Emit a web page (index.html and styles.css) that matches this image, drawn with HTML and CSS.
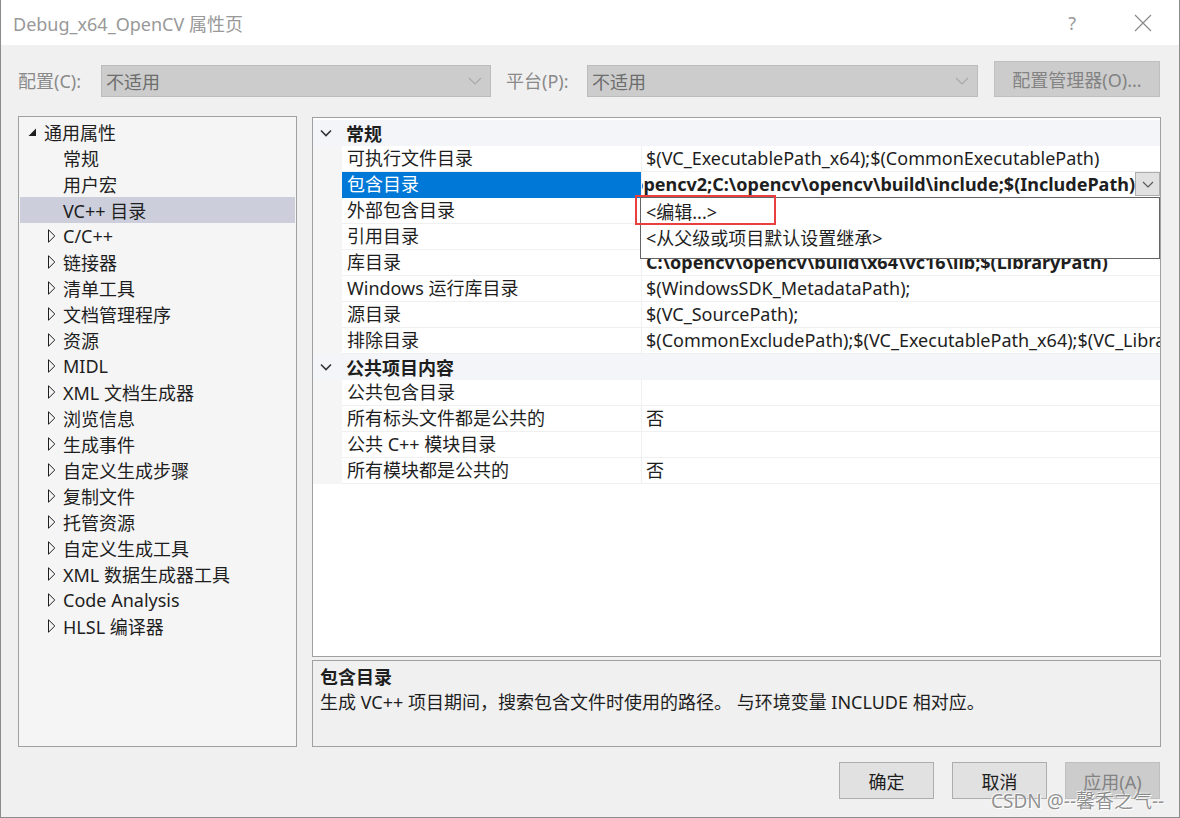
FILE: index.html
```html
<!DOCTYPE html>
<html lang="zh-CN">
<head>
    <meta charset="UTF-8">
    <title>Debug_x64_OpenCV 属性页</title>
    <link rel="stylesheet" href="styles.css">
</head>
<body>
<div class="window">
    <div class="titlebar">
        <span class="title">Debug_x64_OpenCV 属性页</span>
        <span class="help">?</span>
        <svg class="close" width="18" height="18" viewBox="0 0 18 18">
            <path d="M1 1 L17 17 M17 1 L1 17" stroke="#8a8a8a" stroke-width="1.2" fill="none"/>
        </svg>
    </div>

    <div class="config-row">
        <label class="cfg-label">配置(C):</label>
        <div class="combo combo-cfg">
            <span>不适用</span>
            <svg width="14" height="8" viewBox="0 0 14 8"><path d="M1 1 L7 7 L13 1" stroke="#a8a8a8" stroke-width="1.1" fill="none"/></svg>
        </div>
        <label class="cfg-label plat-label">平台(P):</label>
        <div class="combo combo-plat">
            <span>不适用</span>
            <svg width="14" height="8" viewBox="0 0 14 8"><path d="M1 1 L7 7 L13 1" stroke="#a8a8a8" stroke-width="1.1" fill="none"/></svg>
        </div>
        <button class="btn btn-disabled cfg-mgr">配置管理器(O)...</button>
    </div>

    <div class="main">
        <div class="tree">
            <div class="tree-row root">
                <span class="twisty"><svg width="9" height="9" viewBox="0 0 9 9"><path d="M8 0.5 L8 8 L0.5 8 Z" fill="#1e1e1e"/></svg></span>
                <span>通用属性</span>
            </div>
            <div class="tree-row child"><span class="twisty"></span><span>常规</span></div>
            <div class="tree-row child"><span class="twisty"></span><span>用户宏</span></div>
            <div class="tree-row child selected"><span class="twisty"></span><span>VC++ 目录</span></div>
            <div class="tree-row child"><span class="twisty"><svg class="tri" viewBox="0 0 8 14"><path d="M0.5 0.8 L6.8 7 L0.5 13.2 Z"/></svg></span><span>C/C++</span></div>
            <div class="tree-row child"><span class="twisty"><svg class="tri" viewBox="0 0 8 14"><path d="M0.5 0.8 L6.8 7 L0.5 13.2 Z"/></svg></span><span>链接器</span></div>
            <div class="tree-row child"><span class="twisty"><svg class="tri" viewBox="0 0 8 14"><path d="M0.5 0.8 L6.8 7 L0.5 13.2 Z"/></svg></span><span>清单工具</span></div>
            <div class="tree-row child"><span class="twisty"><svg class="tri" viewBox="0 0 8 14"><path d="M0.5 0.8 L6.8 7 L0.5 13.2 Z"/></svg></span><span>文档管理程序</span></div>
            <div class="tree-row child"><span class="twisty"><svg class="tri" viewBox="0 0 8 14"><path d="M0.5 0.8 L6.8 7 L0.5 13.2 Z"/></svg></span><span>资源</span></div>
            <div class="tree-row child"><span class="twisty"><svg class="tri" viewBox="0 0 8 14"><path d="M0.5 0.8 L6.8 7 L0.5 13.2 Z"/></svg></span><span>MIDL</span></div>
            <div class="tree-row child"><span class="twisty"><svg class="tri" viewBox="0 0 8 14"><path d="M0.5 0.8 L6.8 7 L0.5 13.2 Z"/></svg></span><span>XML 文档生成器</span></div>
            <div class="tree-row child"><span class="twisty"><svg class="tri" viewBox="0 0 8 14"><path d="M0.5 0.8 L6.8 7 L0.5 13.2 Z"/></svg></span><span>浏览信息</span></div>
            <div class="tree-row child"><span class="twisty"><svg class="tri" viewBox="0 0 8 14"><path d="M0.5 0.8 L6.8 7 L0.5 13.2 Z"/></svg></span><span>生成事件</span></div>
            <div class="tree-row child"><span class="twisty"><svg class="tri" viewBox="0 0 8 14"><path d="M0.5 0.8 L6.8 7 L0.5 13.2 Z"/></svg></span><span>自定义生成步骤</span></div>
            <div class="tree-row child"><span class="twisty"><svg class="tri" viewBox="0 0 8 14"><path d="M0.5 0.8 L6.8 7 L0.5 13.2 Z"/></svg></span><span>复制文件</span></div>
            <div class="tree-row child"><span class="twisty"><svg class="tri" viewBox="0 0 8 14"><path d="M0.5 0.8 L6.8 7 L0.5 13.2 Z"/></svg></span><span>托管资源</span></div>
            <div class="tree-row child"><span class="twisty"><svg class="tri" viewBox="0 0 8 14"><path d="M0.5 0.8 L6.8 7 L0.5 13.2 Z"/></svg></span><span>自定义生成工具</span></div>
            <div class="tree-row child"><span class="twisty"><svg class="tri" viewBox="0 0 8 14"><path d="M0.5 0.8 L6.8 7 L0.5 13.2 Z"/></svg></span><span>XML 数据生成器工具</span></div>
            <div class="tree-row child"><span class="twisty"><svg class="tri" viewBox="0 0 8 14"><path d="M0.5 0.8 L6.8 7 L0.5 13.2 Z"/></svg></span><span>Code Analysis</span></div>
            <div class="tree-row child"><span class="twisty"><svg class="tri" viewBox="0 0 8 14"><path d="M0.5 0.8 L6.8 7 L0.5 13.2 Z"/></svg></span><span>HLSL 编译器</span></div>
        </div>

        <div class="right">
            <div class="grid">
                <div class="cat-row">
                    <span class="cat-chevron"><svg width="12" height="8" viewBox="0 0 12 8"><path d="M1 1.5 L6 6.5 L11 1.5" stroke="#333" stroke-width="1.6" fill="none"/></svg></span>
                    <span class="cat-name">常规</span>
                </div>
                <div class="prop-row">
                    <span class="gutter"></span>
                    <span class="name">可执行文件目录</span>
                    <span class="value">$(VC_ExecutablePath_x64);$(CommonExecutablePath)</span>
                </div>
                <div class="prop-row">
                    <span class="gutter"></span>
                    <span class="name active">包含目录</span>
                    <span class="value edit">
                        <span class="edit-text"><b>C:\opencv\opencv\build\include\opencv2;C:\opencv\opencv\build\include;$(IncludePath)</b></span>
                        <span class="drop-btn"><svg width="12" height="7" viewBox="0 0 12 7"><path d="M1 1 L6 6 L11 1" stroke="#555" stroke-width="1.1" fill="none"/></svg></span>
                    </span>
                </div>
                <div class="prop-row">
                    <span class="gutter"></span>
                    <span class="name">外部包含目录</span>
                    <span class="value"></span>
                </div>
                <div class="prop-row">
                    <span class="gutter"></span>
                    <span class="name">引用目录</span>
                    <span class="value"></span>
                </div>
                <div class="prop-row">
                    <span class="gutter"></span>
                    <span class="name">库目录</span>
                    <span class="value"><b>C:\opencv\opencv\build\x64\vc16\lib;$(LibraryPath)</b></span>
                </div>
                <div class="prop-row">
                    <span class="gutter"></span>
                    <span class="name">Windows 运行库目录</span>
                    <span class="value">$(WindowsSDK_MetadataPath);</span>
                </div>
                <div class="prop-row">
                    <span class="gutter"></span>
                    <span class="name">源目录</span>
                    <span class="value">$(VC_SourcePath);</span>
                </div>
                <div class="prop-row">
                    <span class="gutter"></span>
                    <span class="name">排除目录</span>
                    <span class="value">$(CommonExcludePath);$(VC_ExecutablePath_x64);$(VC_LibraryPath_x64)</span>
                </div>
                <div class="cat-row">
                    <span class="cat-chevron"><svg width="12" height="8" viewBox="0 0 12 8"><path d="M1 1.5 L6 6.5 L11 1.5" stroke="#333" stroke-width="1.6" fill="none"/></svg></span>
                    <span class="cat-name">公共项目内容</span>
                </div>
                <div class="prop-row">
                    <span class="gutter"></span>
                    <span class="name">公共包含目录</span>
                    <span class="value"></span>
                </div>
                <div class="prop-row">
                    <span class="gutter"></span>
                    <span class="name">所有标头文件都是公共的</span>
                    <span class="value">否</span>
                </div>
                <div class="prop-row">
                    <span class="gutter"></span>
                    <span class="name">公共 C++ 模块目录</span>
                    <span class="value"></span>
                </div>
                <div class="prop-row">
                    <span class="gutter"></span>
                    <span class="name">所有模块都是公共的</span>
                    <span class="value">否</span>
                </div>

                <!-- open dropdown of 包含目录 -->
                <div class="dropdown">
                    <div class="drop-item">&lt;编辑...&gt;</div>
                    <div class="drop-item">&lt;从父级或项目默认设置继承&gt;</div>
                </div>
                <div class="mark"></div>
            </div>

            <div class="desc">
                <div class="desc-title">包含目录</div>
                <div class="desc-text">生成 VC++ 项目期间，搜索包含文件时使用的路径。 与环境变量 INCLUDE 相对应。</div>
            </div>
        </div>
    </div>

    <div class="buttons">
        <button class="btn">确定</button>
        <button class="btn">取消</button>
        <button class="btn btn-disabled">应用(A)</button>
    </div>

    <div class="watermark">CSDN @--馨香之气--</div>
</div>
</body>
</html>
```

FILE: styles.css
```css
body {
    margin: 0;
    background: #f0f0f0;
    font-family: "Noto Sans", "Noto Sans CJK SC", sans-serif;
    font-size: 18px;
    color: #1e1e1e;
}
.window {
    position: relative;
    width: 1180px;
    height: 818px;
    box-sizing: border-box;
    border-left: 1px solid #8c8c8c;
    border-right: 1px solid #8c8c8c;
    border-bottom: 1px solid #8c8c8c;
    background: #f0f0f0;
    overflow: hidden;
}
.titlebar {
    height: 45px;
    background: #fff;
    display: flex;
    align-items: center;
    padding-left: 12px;
}
.title {
    font-size: 18px;
    color: #999;
    flex: 1;
}
.help {
    font-size: 18px;
    color: #999;
    margin-right: 58px;
}
.close {
    margin-right: 27px;
}
.config-row {
    display: flex;
    align-items: flex-end;
    padding: 16px 0 0 17px;
    height: 36px;
}
.cfg-label {
    width: 83px;
    height: 32px;
    line-height: 32px;
    color: #8a8a8a;
}
.plat-label {
    width: 81px;
    margin-left: 15px;
}
.combo {
    height: 32px;
    box-sizing: border-box;
    background: #cccccc;
    border: 1px solid #bcbcbc;
    display: flex;
    align-items: center;
    justify-content: space-between;
    padding: 0 8px 0 4px;
    color: #6d6d6d;
}
.combo-cfg { width: 390px; }
.combo-plat { width: 391px; }
.btn {
    font-family: inherit;
    font-size: 18px;
    height: 37px;
    width: 95px;
    background: #e1e1e1;
    border: 1px solid #adadad;
    color: #1e1e1e;
    padding: 0;
}
.btn-disabled {
    background: #cccccc;
    border-color: #bfbfbf;
    color: #838383;
}
.cfg-mgr {
    width: 166px;
    height: 36px;
    margin-left: 16px;
}
.main {
    display: flex;
    margin-top: 19px;
    padding-left: 17px;
    height: 631px;
}
.tree {
    width: 279px;
    box-sizing: border-box;
    border: 1px solid #a0a0a0;
    background: #f5f5f5;
    padding: 2px 1px 0 1px;
}
.tree-row {
    display: flex;
    align-items: center;
    height: 26px;
    padding-left: 28px;
    white-space: nowrap;
}
.tree-row.root {
    padding-left: 8px;
}
.twisty {
    width: 15px;
    height: 26px;
    display: flex;
    align-items: center;
}
.root .twisty {
    width: 16px;
}
.tri {
    width: 8px;
    height: 14px;
    fill: none;
    stroke: #1e1e1e;
    stroke-width: 1;
}
.tree-row.selected {
    background: #cccedb;
}
.right {
    width: 849px;
    margin-left: 15px;
    margin-top: 1px;
    display: flex;
    flex-direction: column;
}
.grid {
    position: relative;
    height: 540px;
    box-sizing: border-box;
    border: 1px solid #a0a0a0;
    background: #fff;
    padding-top: 2px;
}
.cat-row {
    display: flex;
    align-items: center;
    height: 26px;
    background: #f3f5f9;
    font-weight: bold;
}
.cat-chevron {
    width: 33px;
    padding-left: 7px;
    box-sizing: border-box;
    display: flex;
    align-items: center;
}
.prop-row {
    display: flex;
    height: 26px;
    line-height: 25px;
    white-space: nowrap;
}
.gutter {
    width: 29px;
    background: #f5f5f5;
    flex: none;
}
.name {
    width: 299px;
    flex: none;
    box-sizing: border-box;
    padding-left: 5px;
    border-bottom: 1px solid #f0f0f0;
    overflow: hidden;
}
.name.active {
    background: #0078d7;
    color: #fff;
    border-bottom-color: #0078d7;
}
.value {
    flex: 1;
    min-width: 0;
    box-sizing: border-box;
    padding-left: 4px;
    border-left: 1px solid #f0f0f0;
    border-bottom: 1px solid #f0f0f0;
    overflow: hidden;
}
.value.edit {
    display: flex;
    padding-left: 0;
    border-bottom: none;
}
.edit-text {
    flex: 1;
    min-width: 0;
    display: flex;
    justify-content: flex-end;
    overflow: hidden;
}
.drop-btn {
    width: 25px;
    height: 24px;
    box-sizing: border-box;
    background: #e1e1e1;
    border: 1px solid #adadad;
    display: flex;
    align-items: center;
    justify-content: center;
}
.dropdown {
    position: absolute;
    left: 327px;
    top: 79px;
    width: 520px;
    height: 62px;
    box-sizing: border-box;
    background: #fff;
    border: 1px solid #646464;
    padding: 1px 0 0 5px;
}
.drop-item {
    height: 26px;
    line-height: 26px;
}
.mark {
    position: absolute;
    left: 322px;
    top: 77px;
    width: 141px;
    height: 30px;
    box-sizing: border-box;
    border: 2px solid #ea3f3f;
}
.desc {
    margin-top: 3px;
    height: 87px;
    box-sizing: border-box;
    border: 1px solid #a0a0a0;
    background: #f0f0f0;
    padding: 3px 7px;
}
.desc-title {
    font-weight: bold;
    line-height: 26px;
}
.desc-text {
    line-height: 24px;
}
.buttons {
    display: flex;
    justify-content: flex-end;
    gap: 18px;
    margin-top: 15px;
    padding-right: 19px;
}
.watermark {
    position: absolute;
    left: 990px;
    top: 786px;
    font-size: 19px;
    color: rgba(110, 110, 110, 0.75);
    text-shadow: 1px 1px 0 #fff, -1px -1px 0 rgba(255,255,255,0.6);
    white-space: nowrap;
}
```
